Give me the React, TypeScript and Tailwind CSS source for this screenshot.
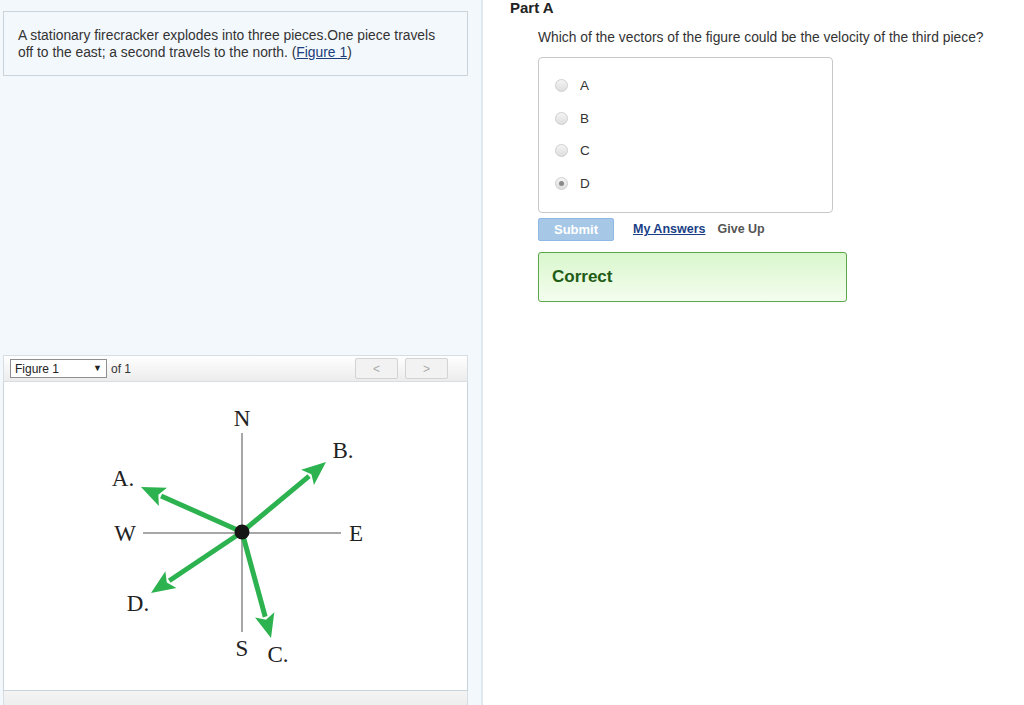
import React from "react";

function Figure() {
  const green = "#2cb24f";
  const c = { x: 238, y: 150 };
  // coords relative to the white figure area (left 3, top 382)
  const arrows = [
    { x: 137, y: 105 },
    { x: 322, y: 80 },
    { x: 267, y: 256 },
    { x: 147, y: 211 },
  ];
  return (
    <svg width="462" height="306" viewBox="0 0 462 306" className="block">
      <line x1={238} y1={51} x2={238} y2={250} stroke="#8a8a8a" strokeWidth={1.5} />
      <line x1={139} y1={151} x2={337} y2={151} stroke="#8a8a8a" strokeWidth={1.5} />
      {arrows.map((a, i) => {
        const dx = a.x - c.x;
        const dy = a.y - c.y;
        const len = Math.hypot(dx, dy);
        const ux = dx / len;
        const uy = dy / len;
        const head = 24;
        const bx = a.x - ux * head;
        const by = a.y - uy * head;
        const px = -uy * 10;
        const py = ux * 10;
        return (
          <g key={i}>
            <line x1={c.x} y1={c.y} x2={bx + ux * 2} y2={by + uy * 2} stroke={green} strokeWidth={5} />
            <polygon
              points={`${a.x},${a.y} ${bx + px},${by + py} ${bx + ux * 5},${by + uy * 5} ${bx - px},${by - py}`}
              fill={green}
            />
          </g>
        );
      })}
      <circle cx={c.x} cy={c.y} r={7.5} fill="#151515" />
      <g fontFamily="'Liberation Serif', 'Times New Roman', serif" fontSize="23" fill="#222" textAnchor="middle">
        <text x={238} y={44}>N</text>
        <text x={339} y={76}>B.</text>
        <text x={119} y={104}>A.</text>
        <text x={121} y={159}>W</text>
        <text x={352} y={159}>E</text>
        <text x={134} y={229}>D.</text>
        <text x={238} y={274}>S</text>
        <text x={274} y={280}>C.</text>
      </g>
    </svg>
  );
}

export default function App() {
  const sans = "font-['Liberation_Sans',Arial,sans-serif]";
  return (
    <main className={`flex w-[1024px] h-[705px] overflow-hidden bg-white text-[13.85px] text-[#333] ${sans}`}>
      <div className="w-[483px] shrink-0 bg-[#f3f8fd] border-r-2 border-[#dfe7ef] px-[3px] pt-[11px]">
        <section className="h-[65px] w-[465px] border border-[#c9d3dc] px-[14px] pt-[15px] leading-[17px]">
          A stationary firecracker explodes into three pieces.One piece travels off to the east; a second travels
          to the north. (<span className="text-[#1a3d7a] underline">Figure 1</span>)
        </section>
        <section className="mt-[279px] w-[465px]">
          <div className="flex h-[27px] items-center border border-[#d6dde4] bg-gradient-to-b from-white to-[#ececec] pl-[6px]">
            <div className="flex h-[19px] w-[97px] items-center justify-between border border-[#8f8f8f] bg-white pl-[4px] pr-[4px] text-[12px] text-[#222]">
              <span>Figure 1</span>
              <span className="text-[9px]">▼</span>
            </div>
            <span className="ml-[4px] text-[12px] text-[#333]">of 1</span>
            <div className="ml-auto mr-[19px] flex gap-[7px]">
              <div className="flex h-[21px] w-[43px] items-center justify-center rounded-[2px] border border-[#d3d3d3] bg-[#f2f2f2] text-[12px] text-[#aaa]">
                &lt;
              </div>
              <div className="flex h-[21px] w-[43px] items-center justify-center rounded-[2px] border border-[#d3d3d3] bg-[#f2f2f2] text-[12px] text-[#aaa]">
                &gt;
              </div>
            </div>
          </div>
          <div className="h-[309px] border border-t-0 border-[#c9d3dc] bg-white">
            <Figure />
          </div>
          <div className="h-[20px] border border-t-0 border-[#d6dde4] bg-gradient-to-b from-[#f4f4f4] to-[#ececec]"></div>
        </section>
      </div>
      <div className="flex-1 pl-[27px] pt-0">
        <h1 className="text-[15px] font-bold text-[#222] leading-[16px] mt-[0px]">Part A</h1>
        <div className="pl-[28px]">
          <p className="mt-[13px] leading-[16px]">Which of the vectors of the figure could be the velocity of the third piece?</p>
          <div className="mt-[12px] h-[156px] w-[295px] rounded-[4px] border border-[#c8c8c8] bg-white pl-[16px] pt-[20px]">
            {["A", "B", "C", "D"].map((l, i) => (
              <div key={l} className="flex h-[32.5px] items-start">
                <span className="mt-[1px] flex h-[13px] w-[13px] items-center justify-center rounded-full border border-[#cfcfcf] bg-gradient-to-b from-[#f4f4f4] to-[#dedede]">
                  {i === 3 && <span className="h-[5px] w-[5px] rounded-full bg-[#8a8a8a]"></span>}
                </span>
                <span className="ml-[12px] text-[13.5px] leading-[15px] text-[#333]">{l}</span>
              </div>
            ))}
          </div>
          <div className="mt-[5px] flex items-center">
            <div className="flex h-[23px] w-[76px] items-center justify-center rounded-[2px] border border-[#8fb8e6] bg-[#a6c7e6] text-[13px] font-bold text-white">
              Submit
            </div>
            <span className="ml-[19px] text-[12.5px] font-bold text-[#1a3f86] underline">My Answers</span>
            <span className="ml-[12px] text-[12.5px] font-bold text-[#555]">Give Up</span>
          </div>
          <div className="mt-[11px] flex h-[50px] w-[309px] items-center rounded-[3px] border border-[#5aa648] bg-gradient-to-b from-[#d9f7cd] to-[#f4fdee] pl-[13px] text-[17px] font-bold text-[#1f5c16]">
            Correct
          </div>
        </div>
      </div>
    </main>
  );
}
